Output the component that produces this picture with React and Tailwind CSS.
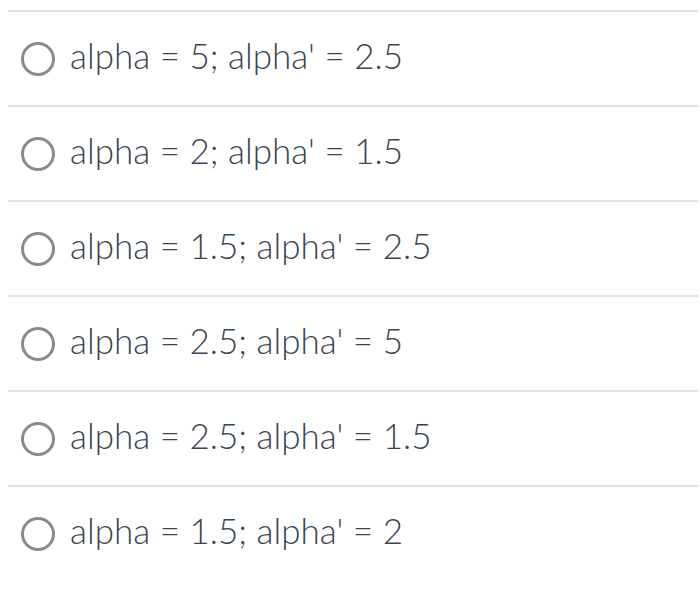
export default function App() {
  const opts = [
    "alpha = 5; alpha' = 2.5",
    "alpha = 2; alpha' = 1.5",
    "alpha = 1.5; alpha' = 2.5",
    "alpha = 2.5; alpha' = 5",
    "alpha = 2.5; alpha' = 1.5",
    "alpha = 1.5; alpha' = 2",
  ];
  return (
    <div className="w-[700px] h-[607px] bg-white pt-[10px] pl-[8px] pr-[2px]" style={{ fontFamily: "Lato, 'Liberation Sans', sans-serif" }}>
      {opts.map((o) => (
        <div key={o} className="border-t-2 border-[#e2e2e2] h-[95px] flex items-center">
          <div className="w-[34px] h-[34px] rounded-full border-[3px] border-[#8a8a8a] ml-[13px] mr-[15px] shrink-0" />
          <span className="text-[35px] text-[#3b4550] leading-none font-light -mt-[6px]">{o}</span>
        </div>
      ))}
    </div>
  );
}
